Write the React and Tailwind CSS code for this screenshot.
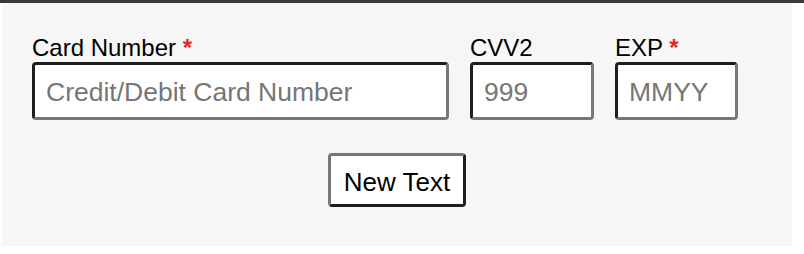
export default function App() {
  const inputCls =
    "h-[58px] rounded-[4px] border-[3px] border-t-[#1e1e1e] border-l-[#1e1e1e] border-r-[#777777] border-b-[#777777] bg-white pl-[11px] pt-[3px] text-[26.5px] text-black placeholder:text-[#767676] outline-none";
  const labelCls = "block h-[26px] leading-[26px] text-[24px] text-black mb-[1px] whitespace-nowrap";
  return (
    <div className="w-[804px] h-[254px] bg-white" style={{ fontFamily: '"Liberation Sans", Arial, sans-serif' }}>
      <div className="h-[3px] w-full bg-[#3a3a3a]" />
      <div className="ml-[2px] w-[790px] bg-[#f6f6f6] pt-[32px] pb-[39px] pl-[30px]">
        <div className="flex gap-[21px]">
          <div className="flex flex-col">
            <label className={labelCls}>
              Card Number <span className="text-[#e8251b] font-bold">*</span>
            </label>
            <input className={`${inputCls} w-[417px]`} placeholder="Credit/Debit Card Number" />
          </div>
          <div className="flex flex-col">
            <label className={labelCls}>CVV2</label>
            <input className={`${inputCls} w-[124px]`} placeholder="999" />
          </div>
          <div className="flex flex-col">
            <label className={labelCls}>
              EXP <span className="text-[#e8251b] font-bold">*</span>
            </label>
            <input className={`${inputCls} w-[123px]`} placeholder="MMYY" />
          </div>
        </div>
        <div className="mt-[33px] flex justify-center pr-[30px]">
          <button className="h-[54px] w-[138px] rounded-[4px] border-[3px] border-t-[#777777] border-l-[#777777] border-r-[#1e1e1e] border-b-[#1e1e1e] bg-white pt-[4px] text-[26px] leading-none text-black">
            New Text
          </button>
        </div>
      </div>
    </div>
  );
}
